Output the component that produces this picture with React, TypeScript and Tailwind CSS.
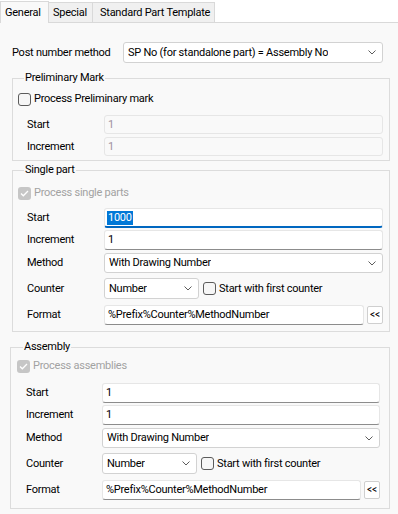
import React from 'react';

// WinForms-like numbering settings dialog

function Chevron() {
  return (
    <svg width="8" height="5" viewBox="0 0 8 5" className="shrink-0">
      <path d="M0.5 0.5L4 4L7.5 0.5" fill="none" stroke="#5c5c5c" strokeWidth="1" />
    </svg>
  );
}

function Select({ text, className = '' }: { text: string; className?: string }) {
  return (
    <div
      className={`flex h-[20px] items-center justify-between rounded-[3px] border border-[#d2d2d2] bg-white pl-[4px] pr-[6px] ${className}`}
    >
      <span className="truncate">{text}</span>
      <Chevron />
    </div>
  );
}

type InputKind = 'normal' | 'disabled' | 'focused';

function TextBox({ value, kind = 'normal', className = '' }: { value: string; kind?: InputKind; className?: string }) {
  if (kind === 'disabled') {
    return (
      <div className={`flex h-[19px] items-center rounded-[3px] border border-[#e6e6e6] bg-[#f9f9f9] pl-[3px] text-[#a0919f] ${className}`}>
        {value}
      </div>
    );
  }
  if (kind === 'focused') {
    return (
      <div className={`flex h-[20px] items-center rounded-[3px] border border-b-2 border-[#e6e6e6] border-b-[#0067c0] bg-white pl-[2px] ${className}`}>
        <span className="bg-[#0078d7] px-[1px] text-white">{value}</span>
      </div>
    );
  }
  return (
    <div className={`flex h-[20px] items-center rounded-[3px] border border-[#e6e6e6] border-b-[#8c8c8c] bg-white pl-[3px] ${className}`}>
      {value}
    </div>
  );
}

function CheckBox({ label, checked = false, disabled = false }: { label: string; checked?: boolean; disabled?: boolean }) {
  return (
    <div className="flex h-[16px] items-center gap-[3px]">
      {checked ? (
        <span className={`flex h-[13px] w-[13px] items-center justify-center rounded-[3px] ${disabled ? 'bg-[#c6c6c6]' : 'bg-[#0067c0]'}`}>
          <svg width="9" height="7" viewBox="0 0 9 7">
            <path d="M1 3.5L3.3 5.8L8 1" fill="none" stroke="#ffffff" strokeWidth="1.3" />
          </svg>
        </span>
      ) : (
        <span className="h-[13px] w-[13px] rounded-[3px] border border-[#5b5b5b] bg-[#f6f6f6]" />
      )}
      <span className={disabled ? 'text-[#a2a2a2]' : ''}>{label}</span>
    </div>
  );
}

function Row({ label, labelW, children, className = '' }: { label: string; labelW: string; children: React.ReactNode; className?: string }) {
  return (
    <div className={`flex items-center ${className}`}>
      <span className={`shrink-0 ${labelW}`}>{label}</span>
      <div className="flex min-w-0 flex-1 items-center">{children}</div>
    </div>
  );
}

function FormatRow({ labelW, className = '' }: { labelW: string; className?: string }) {
  return (
    <Row label="Format" labelW={labelW} className={className}>
      <TextBox value="%Prefix%Counter%MethodNumber" className="flex-1" />
      <button className="ml-[3px] flex h-[18px] w-[16px] items-center justify-center rounded-[2px] border border-[#cfcfcf] bg-white text-[10px] leading-none tracking-normal">
        &lt;&lt;
      </button>
    </Row>
  );
}

function CounterRow({ labelW, className = '' }: { labelW: string; className?: string }) {
  return (
    <Row label="Counter" labelW={labelW} className={className}>
      <Select text="Number" className="h-[21px] w-[95px]" />
      <div className="ml-[4px]">
        <CheckBox label="Start with first counter" />
      </div>
    </Row>
  );
}

function Tabs() {
  return (
    <div className="flex h-[23px] items-end border-b border-[#d9d9d9] bg-white">
      <div className="relative z-10 -mb-px flex h-[22px] w-[49px] items-center border border-b-0 border-[#d9d9d9] bg-[#f9f9f9] pl-[4px]">
        General
      </div>
      <div className="flex h-[20px] w-[44px] items-center border border-b-0 border-l-0 border-[#d9d9d9] bg-[#f0f0f0] pl-[4px]">
        Special
      </div>
      <div className="flex h-[20px] w-[122px] items-center border border-b-0 border-l-0 border-[#d9d9d9] bg-[#f0f0f0] pl-[7px]">
        Standard Part Template
      </div>
    </div>
  );
}

export default function App() {
  return (
    <div className="h-[514px] w-[398px] overflow-hidden bg-white font-['Roboto',sans-serif] text-[11px] leading-[14px] tracking-[-0.25px] text-black">
      <Tabs />
      <div className="flex h-[491px] flex-col bg-[#f9f9f9]">
        {/* Post number method */}
        <div className="mt-[19px] flex items-center pl-[12px] pr-[15px]">
          <span className="w-[111px] shrink-0">Post number method</span>
          <Select text="SP No (for standalone part) = Assembly No" className="h-[21px] flex-1" />
        </div>

        {/* Preliminary Mark */}
        <fieldset className="ml-[12px] mt-[8px] w-[378px] border border-[#dcdcdc] pb-[4px] pl-[5px] pr-[6px]">
          <legend className="ml-[6px] px-[1px]">Preliminary Mark</legend>
          <div className="mt-[6px]">
            <CheckBox label="Process Preliminary mark" />
          </div>
          <div className="pl-[9px]">
            <Row label="Start" labelW="w-[77px]" className="mt-[8px]">
              <TextBox value="1" kind="disabled" className="flex-1" />
            </Row>
            <Row label="Increment" labelW="w-[77px]" className="mt-[3px]">
              <TextBox value="1" kind="disabled" className="flex-1" />
            </Row>
          </div>
        </fieldset>

        {/* Single part */}
        <fieldset className="ml-[12px] mt-[2px] w-[378px] border border-[#dcdcdc] pb-[6px] pl-[5px] pr-[6px]">
          <legend className="ml-[6px] px-[1px]">Single part</legend>
          <div className="mt-[8px]">
            <CheckBox label="Process single parts" checked disabled />
          </div>
          <div className="pl-[9px]">
            <Row label="Start" labelW="w-[77px]" className="mt-[7px]">
              <TextBox value="1000" kind="focused" className="flex-1" />
            </Row>
            <Row label="Increment" labelW="w-[77px]" className="mt-[2px]">
              <TextBox value="1" className="flex-1" />
            </Row>
            <Row label="Method" labelW="w-[77px]" className="mt-[3px]">
              <Select text="With Drawing Number" className="flex-1" />
            </Row>
            <CounterRow labelW="w-[77px]" className="mt-[5px]" />
            <FormatRow labelW="w-[77px]" className="mt-[6px]" />
          </div>
        </fieldset>

        {/* Assembly */}
        <fieldset className="ml-[10px] mt-[8px] w-[380px] border border-[#dcdcdc] pb-[8px] pl-[6px] pr-[9px]">
          <legend className="ml-[6px] px-[1px]">Assembly</legend>
          <div className="mt-[4px]">
            <CheckBox label="Process assemblies" checked disabled />
          </div>
          <div className="pl-[9px]">
            <Row label="Start" labelW="w-[76px]" className="mt-[9px]">
              <TextBox value="1" className="flex-1" />
            </Row>
            <Row label="Increment" labelW="w-[76px]" className="mt-[2px]">
              <TextBox value="1" className="flex-1" />
            </Row>
            <Row label="Method" labelW="w-[76px]" className="mt-[3px]">
              <Select text="With Drawing Number" className="flex-1" />
            </Row>
            <CounterRow labelW="w-[76px]" className="mt-[5px]" />
            <FormatRow labelW="w-[76px]" className="mt-[6px]" />
          </div>
        </fieldset>
      </div>
    </div>
  );
}
